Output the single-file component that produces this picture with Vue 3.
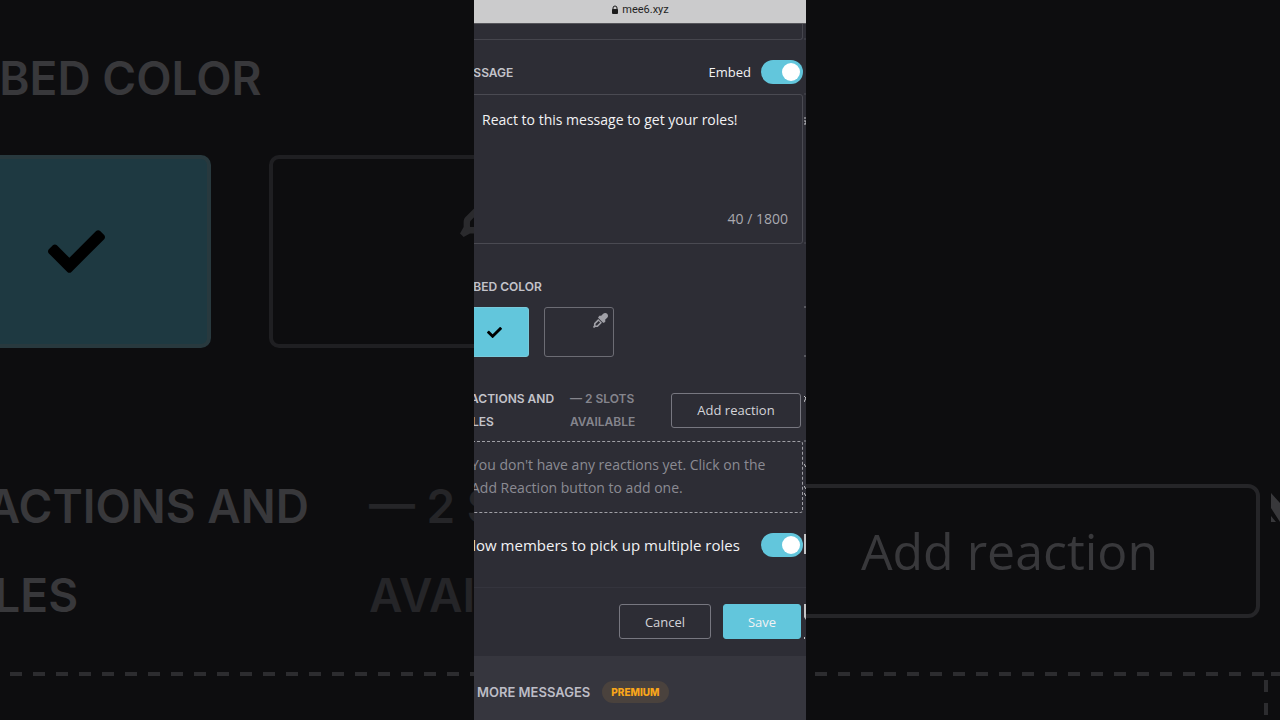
<script setup>
import { ref } from 'vue'

const message = ref('React to this message to get your roles!')
const embed = ref(true)
const multiple = ref(true)

const check =
  'M173.9 439.4l-166.4-166.4c-10-10-10-26.2 0-36.2l36.2-36.2c10-10 26.2-10 36.2 0L192 312.7 432.1 72.6c10-10 26.2-10 36.2 0l36.2 36.2c10 10 10 26.2 0 36.2l-294.4 294.4c-10 10-26.2 10-36.2 0z'
const dropper =
  'M50.8 333.3c-12 12-18.8 28.2-18.8 45.2V424L0 480l32 32 56-32h45.5c17 0 33.2-6.7 45.2-18.7l126.7-126.7-128-128zM192 270l50 50-98 98q-6 6-15 6H88v-41q0-9 6-15zM483.9 28.1c-37.5-37.5-98.3-37.5-135.8 0L271 105.2l-13.1-13.1c-9.4-9.4-24.6-9.3-33.9 0l-41 41c-9.4 9.4-9.4 24.6 0 33.9L345 329c9.4 9.4 24.6 9.3 33.9 0l41-41c9.4-9.4 9.4-24.6 0-33.9L406.8 241l77.1-77.1c37.5-37.5 37.5-98.3 0-135.8z'
</script>

<template>
  <div class="stage">
    <div class="backdrop" aria-hidden="true">
      <div class="back-content">
        <div class="back-title">EMBED COLOR</div>
        <div class="back-swatches">
          <div class="back-swatch back-selected">
            <svg class="back-check" viewBox="0 0 512 512"><path :d="check" /></svg>
          </div>
          <div class="back-swatch">
            <svg class="back-dropper" viewBox="0 0 512 512"><path :d="dropper" fill-rule="evenodd" /></svg>
          </div>
        </div>
        <div class="back-reactions">
          <div class="back-title back-name">REACTIONS AND ROLES</div>
          <div class="back-title back-slots">— 2 SLOTS AVAILABLE</div>
          <button class="back-button" type="button" tabindex="-1">Add reaction</button>
        </div>
        <svg class="back-dashes">
          <path d="M0 2H1327" />
          <path d="M1325 8V200" />
        </svg>
      </div>
      <svg class="back-edge" viewBox="0 0 9 720">
        <path d="M0 493l9 10v19l-9-14zM0 516l5 6H0z" fill="#38383b" />
        <path d="M0 674h9" stroke="#2c2c2f" stroke-width="4" />
      </svg>
    </div>

    <main class="phone">
      <header class="address">
        <svg class="lock" viewBox="0 0 8 10">
          <path d="M2 5V3a2 2 0 0 1 4 0v2" fill="none" stroke="#1c1c1c" />
          <rect x="1" y="4" width="6" height="5" rx="1" fill="#1c1c1c" />
        </svg>
        <span>mee6.xyz</span>
      </header>

      <div class="content">
        <div class="previous"></div>

        <div class="row message-row">
          <label class="title" for="message">MESSAGE</label>
          <label class="switch-row">
            <span>Embed</span>
            <input v-model="embed" class="switch" type="checkbox" role="switch" />
          </label>
        </div>

        <div class="editor">
          <textarea id="message" v-model="message" class="text" maxlength="1800"></textarea>
          <span class="count">{{ message.length }} / 1800</span>
        </div>

        <div class="title color-title">EMBED COLOR</div>
        <div class="swatches">
          <button class="swatch selected" type="button" aria-label="Blue">
            <svg class="check" viewBox="0 0 512 512"><path :d="check" /></svg>
          </button>
          <button class="swatch" type="button" aria-label="Custom color">
            <svg class="dropper" viewBox="0 0 512 512"><path :d="dropper" fill-rule="evenodd" /></svg>
          </button>
        </div>

        <div class="reactions">
          <div class="title name">REACTIONS AND ROLES</div>
          <div class="title slots">— 2 SLOTS AVAILABLE</div>
          <button class="button add" type="button">Add reaction</button>
        </div>

        <p class="empty">You don't have any reactions yet. Click on the Add Reaction button to add one.</p>

        <label class="row multiple">
          <span>Allow members to pick up multiple roles</span>
          <input v-model="multiple" class="switch" type="checkbox" role="switch" />
        </label>
      </div>

      <div class="actions">
        <button class="button cancel" type="button">Cancel</button>
        <button class="button save" type="button">Save</button>
      </div>

      <footer class="more">
        <span class="more-title">MORE MESSAGES</span>
        <span class="premium">PREMIUM</span>
      </footer>

      <svg class="peek" viewBox="0 0 2 720" aria-hidden="true">
        <path d="M0 39h2M0 94h2M0 243h2" stroke="#4a4a52" />
        <path d="M0 307h2M0 356h2M0 441h2" stroke="#85858c" />
        <path d="M0 118h2M0 121h2v3h-2M0 396l2 2-2 4M0 464l2 3M0 486l2 3M0 493l2 3" fill="none" stroke="#c8c8cc" />
        <path d="M0 534h2v20h-2zM0 604h2v16l-2-3zM0 637h1v2h-1z" fill="#c4c4c6" />
      </svg>
    </main>
  </div>
</template>

<style>
body {
  margin: 0;
  background: #0d0d0f;
}
</style>

<style scoped>
* {
  box-sizing: border-box;
}
.stage {
  position: relative;
  display: flex;
  justify-content: center;
  min-height: 100vh;
  overflow: hidden;
  background: #0d0d0f;
  font-family: "Open Sans", "Noto Sans", sans-serif;
}
button,
textarea {
  font-family: inherit;
}

/* Enlarged, dimmed copy of the page behind the phone view */
.backdrop {
  position: absolute;
  inset: 0;
  overflow: hidden;
}
.back-content {
  margin: 34px 12px 0 -59px;
}
.back-title {
  margin-left: -12px;
  font: 600 46px/89px Inter, sans-serif;
  color: #38383b;
}
.back-swatches {
  display: flex;
  gap: 58px;
  margin-top: 32px;
}
.back-swatch {
  display: flex;
  width: 270px;
  height: 193px;
  border: 4px solid #1f1f22;
  border-radius: 10px;
}
.back-selected {
  align-items: center;
  justify-content: center;
  background: #1e3941;
  border-color: #28393e;
}
.back-check {
  width: 57px;
  height: 57px;
}
.back-dropper {
  width: 58px;
  height: 58px;
  margin: 20px 17px 0 auto;
  fill: #2a2a2d;
}
.back-reactions {
  display: flex;
  align-items: center;
  margin: 114px 8px 32px 0;
}
.back-name {
  width: 440px;
}
.back-slots {
  width: 300px;
  margin-left: 0;
  color: #252528;
}
.back-button {
  width: 501px;
  height: 134px;
  margin-left: auto;
  border: 4px solid #252528;
  border-radius: 12px;
  background: transparent;
  color: #38383b;
  font-size: 50px;
}
.back-dashes {
  display: block;
  width: 100%;
  height: 200px;
  fill: none;
  stroke: #2c2c2f;
  stroke-width: 4px;
  stroke-dasharray: 12 11;
}
.back-edge {
  position: absolute;
  top: 0;
  right: 0;
  width: 9px;
  height: 720px;
}

.phone {
  position: relative;
  display: flex;
  flex-direction: column;
  width: 332px;
  overflow: hidden;
  background: #2d2d35;
  color: #f2f2f4;
}
.address {
  display: flex;
  align-items: center;
  justify-content: center;
  gap: 3px;
  height: 24px;
  padding-bottom: 4px;
  border-bottom: 1px solid #55555a;
  background: #cbcbcc;
  color: #242424;
  font: 11px/19px Roboto, sans-serif;
}
.lock {
  width: 8px;
  height: 10px;
}
.content {
  margin: 0 3px 0 -15px;
}
.previous {
  height: 16px;
  border: solid #45454d;
  border-width: 0 1px 1px 0;
  border-radius: 0 0 3px 0;
}
.row {
  display: flex;
  align-items: center;
  justify-content: space-between;
}
.title {
  margin-left: -4px;
  font: 600 12px/23px Inter, sans-serif;
  color: #c3c3ca;
}
.message-row {
  height: 44px;
  margin-top: 10px;
}
.switch-row {
  display: flex;
  align-items: center;
  gap: 10px;
  font-size: 13px;
}
.switch {
  display: flex;
  flex: none;
  appearance: none;
  width: 42px;
  height: 24px;
  margin: 0;
  padding: 3px;
  border-radius: 12px;
  background: #4a4a52;
}
.switch::before {
  content: "";
  width: 18px;
  height: 18px;
  border-radius: 50%;
  background: #fff;
}
.switch:checked {
  justify-content: flex-end;
  background: #62c6dc;
}
.editor {
  position: relative;
  border: 1px solid #4a4a52;
  border-radius: 3px;
}
.text {
  display: block;
  width: 100%;
  height: 148px;
  padding: 13px 22px;
  border: 0;
  outline: 0;
  resize: none;
  background: transparent;
  color: #f2f2f4;
  font-size: 14px;
  line-height: 23px;
}
.count {
  position: absolute;
  right: 14px;
  bottom: 13px;
  color: #a9a9b0;
  font-size: 14px;
  line-height: 23px;
}
.color-title {
  margin-top: 31px;
}
.swatches {
  display: flex;
  gap: 15px;
  margin-top: 9px;
}
.swatch {
  display: flex;
  width: 70px;
  height: 50px;
  padding: 0;
  border: 1px solid #6c6c74;
  border-radius: 3px;
  background: transparent;
}
.selected {
  align-items: center;
  justify-content: center;
  border-color: #78cadb;
  background: #62c6dc;
}
.check {
  width: 15px;
  height: 15px;
}
.dropper {
  width: 15px;
  height: 15px;
  margin: 5px 5px 0 auto;
  fill: #a0a0a7;
}
.reactions {
  display: flex;
  align-items: center;
  margin: 30px 2px 8px 0;
}
.name {
  width: 115px;
}
.slots {
  width: 80px;
  margin-left: 0;
  color: #85858d;
}
.button {
  height: 35px;
  padding: 0;
  border: 1px solid #777780;
  border-radius: 3px;
  background: transparent;
  color: #d4d4d9;
  font-size: 13px;
}
.add {
  width: 130px;
  margin-left: auto;
}
.empty {
  margin: 0;
  padding: 11px 11px 13px;
  border: 1px dashed #a0a0a6;
  border-radius: 3px;
  color: #8b8b93;
  font-size: 14px;
  line-height: 23px;
}
.multiple {
  height: 24px;
  margin: 20px 0 30px;
  font-size: 15px;
}
.actions {
  display: flex;
  justify-content: flex-end;
  gap: 12px;
  padding: 16px 5px 17px 0;
  border-top: 1px solid #34343d;
}
.cancel {
  width: 92px;
}
.save {
  width: 78px;
  border-color: #62c6dc;
  background: #62c6dc;
  color: #f2f2f4;
}
.more {
  display: flex;
  flex: 1;
  align-items: center;
  gap: 12px;
  padding: 20px 3px 12px;
  background: #36363e;
}
.more-title {
  color: #bdbdc6;
  font: 600 13px/22px Inter, sans-serif;
}
.premium {
  padding: 0 9px;
  border-radius: 11px;
  background: #4a423d;
  color: #f9a61a;
  font: 800 10px/22px Inter, sans-serif;
}
.peek {
  position: absolute;
  top: 0;
  right: 0;
  width: 2px;
  height: 720px;
}
</style>
